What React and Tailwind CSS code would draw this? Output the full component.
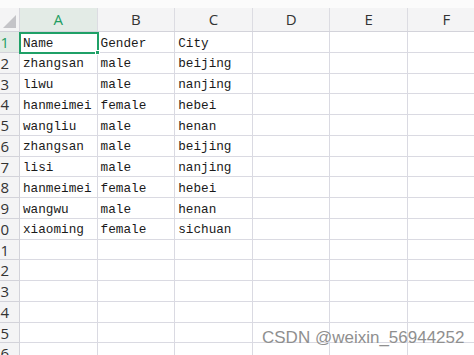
import React from 'react';

const cols = ['A', 'B', 'C', 'D', 'E', 'F'];

const data = [
  ['Name', 'Gender', 'City'],
  ['zhangsan', 'male', 'beijing'],
  ['liwu', 'male', 'nanjing'],
  ['hanmeimei', 'female', 'hebei'],
  ['wangliu', 'male', 'henan'],
  ['zhangsan', 'male', 'beijing'],
  ['lisi', 'male', 'nanjing'],
  ['hanmeimei', 'female', 'hebei'],
  ['wangwu', 'male', 'henan'],
  ['xiaoming', 'female', 'sichuan'],
];

const ROWS = 16;

export default function App() {
  return (
    <div className="relative w-[474px] h-[355px] overflow-hidden bg-white">
      <div className="h-[8px] bg-[#fbfbfb]" />

      {/* column headers */}
      <div className="flex h-[24px] bg-[#f4f4f5] border-b border-[#d3d3da] font-['Open_Sans',sans-serif] text-[15px] text-[#333]">
        <div className="relative w-[20px] shrink-0 border-r border-[#d8d8de]">
          <div className="absolute right-[3px] bottom-[3px] w-0 h-0 border-l-[13px] border-l-transparent border-b-[13px] border-b-[#c4c4c8]" />
        </div>
        {cols.map((c, i) => (
          <div
            key={c}
            className={`w-[77.6px] shrink-0 flex items-center justify-center border-r border-[#dcdce2] ${i === 0 ? 'bg-[#e3ebe6] text-[#1f9e62]' : ''}`}
          >
            {c}
          </div>
        ))}
      </div>

      {/* rows */}
      {Array.from({ length: ROWS }).map((_, r) => (
        <div key={r} className="flex h-[20.75px]">
          <div
            className={`w-[20px] shrink-0 overflow-hidden flex items-center justify-end pr-[10px] pt-[1px] whitespace-nowrap border-r border-b border-[#d3d3da] font-['Open_Sans',sans-serif] text-[15px] ${r === 0 ? 'bg-[#e3ebe6] text-[#1f9e62]' : 'bg-[#f4f4f5] text-[#333]'}`}
          >
            {r + 1}
          </div>
          {cols.map((c, ci) => (
            <div
              key={c}
              className="w-[77.6px] shrink-0 flex items-end pl-[3px] pb-[1.5px] whitespace-nowrap overflow-visible border-r border-b border-[#dadae2] font-['Liberation_Mono',monospace] text-[12.7px] text-[#1a1a1a] leading-none"
            >
              {data[r] && data[r][ci] ? data[r][ci] : ''}
            </div>
          ))}
        </div>
      ))}

      {/* selected cell A1 */}
      <div className="absolute left-[19px] top-[31.5px] w-[79.5px] h-[22px] border-2 border-[#1fa067]" />
      <div className="absolute left-[94.5px] top-[50px] w-[5px] h-[5px] bg-[#1fa067] border border-white" />

      {/* watermark */}
      <div className="absolute left-[262px] top-[329px] font-['Liberation_Sans',Arial,sans-serif] text-[17px] leading-none text-[#8f8f8f] whitespace-nowrap">
        CSDN @weixin_56944252
      </div>
    </div>
  );
}
